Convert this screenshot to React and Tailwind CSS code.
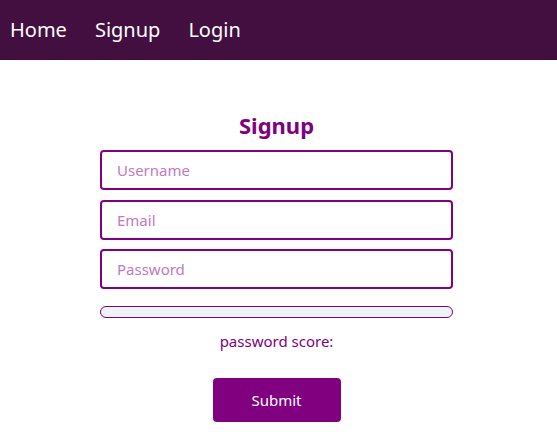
export default function App() {
    return (
        <div className="min-h-screen bg-white" style={{ fontFamily: '"Noto Sans", "Open Sans", sans-serif' }}>
            <nav className="h-[60px] bg-[#430f40] flex items-center px-[10px] gap-[28px]">
                <a href="#" className="text-white text-[20px]">Home</a>
                <a href="#" className="text-white text-[20px]">Signup</a>
                <a href="#" className="text-white text-[20px]">Login</a>
            </nav>

            <main className="flex justify-center pt-[52px] pr-[4px]">
                <form className="w-[353px] flex flex-col items-center" onSubmit={(e) => e.preventDefault()}>
                    <h2 className="text-[22px] font-bold text-[#800080] leading-[26px] mb-[12px]">Signup</h2>
                    <input
                        type="text"
                        placeholder="Username"
                        className="w-full h-[40px] border-2 border-[#800080] rounded-[4px] px-[15px] text-[15px] placeholder:text-[#c07ac0] outline-none"
                    />
                    <input
                        type="email"
                        placeholder="Email"
                        className="w-full h-[40px] mt-[10px] border-2 border-[#800080] rounded-[4px] px-[15px] text-[15px] placeholder:text-[#c07ac0] outline-none"
                    />
                    <input
                        type="password"
                        placeholder="Password"
                        className="w-full h-[40px] mt-[9px] border-2 border-[#800080] rounded-[4px] px-[15px] text-[15px] placeholder:text-[#c07ac0] outline-none"
                    />
                    <div className="w-full h-[12px] mt-[17px] border border-[#800080] rounded-full bg-[#eef2f6]"></div>
                    <p className="mt-[12px] text-[15px] text-[#800080] leading-[22px]">password score:</p>
                    <button
                        type="submit"
                        className="mt-[26px] w-[128px] h-[44px] bg-[#800080] text-white text-[15px] rounded-[4px]"
                    >
                        Submit
                    </button>
                </form>
            </main>
        </div>
    );
}
